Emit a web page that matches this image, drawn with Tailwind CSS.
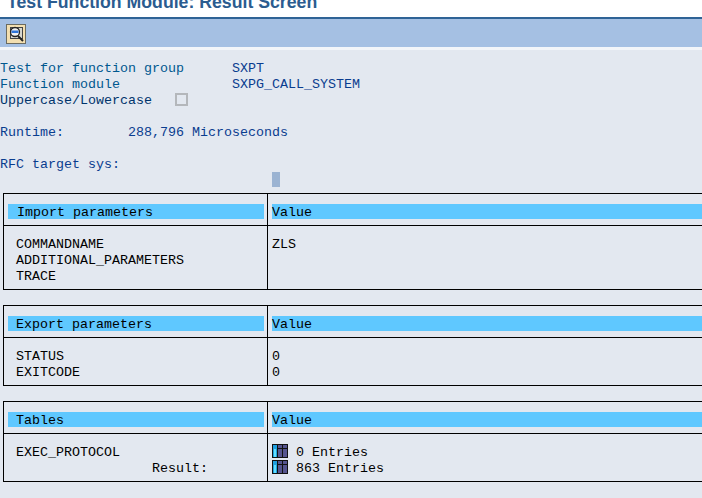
<!DOCTYPE html>
<html lang="en">
<head>
  <meta charset="UTF-8" />
  <title>Test Function Module: Result Screen</title>
  <script src="https://cdn.jsdelivr.net/npm/@tailwindcss/browser@4"></script>
</head>
<body class="h-[498px] w-[702px] overflow-hidden bg-[#e3e8f0] font-['Liberation_Mono',monospace] text-[13.33px] leading-[16px]">

  <!-- Title -->
  <div class="h-[17px] overflow-hidden bg-white pl-[7px]">
    <h1 class="-mt-[8px] font-['Liberation_Sans',sans-serif] text-[17.7px] leading-[20px] font-bold text-[#2b5c8f]">Test Function Module: Result Screen</h1>
  </div>
  <div class="h-[2px] bg-[#2f6396]"></div>

  <!-- Toolbar -->
  <div class="flex h-[28px] items-start bg-[#a5c0e3] pt-[5px] pl-[6px]">
    <button class="flex h-[20px] w-[20px] items-center justify-center border border-[#6b6b60] bg-[#f3dfb0]">
      <svg width="16" height="16" viewBox="0 0 16 16">
        <rect x="2.5" y="1.5" width="12" height="11" fill="#d8d8d0" stroke="#444"/>
        <circle cx="7" cy="6" r="4.5" fill="#f2f2f2" stroke="#222" stroke-width="1.3"/>
        <path d="M3.5 4.5h7v2.5h-7z" fill="#2f74d8"/>
        <path d="M10 10l5 5" stroke="#222" stroke-width="2"/>
      </svg>
    </button>
  </div>
  <div class="h-[3px] bg-[#f2f5f9]"></div>

  <!-- Header info -->
  <div class="pt-[11px]">
    <div class="flex h-[16px] text-[#00588f]"><span class="w-[232px]">Test for function group</span><span class="text-[#0a3d8f]">SXPT</span></div>
    <div class="flex h-[16px] text-[#00588f]"><span class="w-[232px]">Function module</span><span class="text-[#0a3d8f]">SXPG_CALL_SYSTEM</span></div>
    <div class="flex h-[16px] items-start text-[#00346b]">
      <span class="w-[175px]">Uppercase/Lowercase</span>
      <span class="h-[13px] w-[13px] border-2 border-[#b4b7bb] bg-[#e3e8f0]"></span>
    </div>
    <div class="mt-[16px] flex h-[16px] text-[#0a3d8f]"><span class="w-[128px]">Runtime:</span><span>288,796 Microseconds</span></div>
    <div class="mt-[16px] h-[16px] text-[#0a3d8f]">RFC target sys:</div>
    <div class="h-[21px] pl-[272px]"><div class="-mt-[1px] h-[15px] w-[8px] bg-[#9bb3d2]"></div></div>
  </div>

  <!-- Import parameters -->
  <section class="ml-[3px] border-y border-l border-black text-black">
    <div class="flex h-[32px] border-b border-black">
      <div class="w-[263px] pt-[10px] pl-[4px]"><div class="h-[15px] w-[256px] bg-[#5fc8ff] pl-[9px] leading-[17px]">Import parameters</div></div>
      <div class="flex-1 border-l border-black pt-[10px] pl-[4px]"><div class="h-[15px] bg-[#5fc8ff] leading-[17px]">Value</div></div>
    </div>
    <div class="flex h-[63px]">
      <div class="w-[263px] pt-[11px] pl-[12px]">COMMANDNAME<br>ADDITIONAL_PARAMETERS<br>TRACE</div>
      <div class="flex-1 border-l border-black pt-[11px] pl-[4px]">ZLS</div>
    </div>
  </section>

  <!-- Export parameters -->
  <section class="mt-[15px] ml-[3px] border-y border-l border-black text-black">
    <div class="flex h-[32px] border-b border-black">
      <div class="w-[263px] pt-[10px] pl-[4px]"><div class="h-[15px] w-[256px] bg-[#5fc8ff] pl-[8px] leading-[17px]">Export parameters</div></div>
      <div class="flex-1 border-l border-black pt-[10px] pl-[4px]"><div class="h-[15px] bg-[#5fc8ff] leading-[17px]">Value</div></div>
    </div>
    <div class="flex h-[47px]">
      <div class="w-[263px] pt-[11px] pl-[12px]">STATUS<br>EXITCODE</div>
      <div class="flex-1 border-l border-black pt-[11px] pl-[4px]">0<br>0</div>
    </div>
  </section>

  <!-- Tables -->
  <section class="mt-[15px] ml-[3px] border-y border-l border-black text-black">
    <div class="flex h-[32px] border-b border-black">
      <div class="w-[263px] pt-[10px] pl-[4px]"><div class="h-[15px] w-[256px] bg-[#5fc8ff] pl-[8px] leading-[17px]">Tables</div></div>
      <div class="flex-1 border-l border-black pt-[10px] pl-[4px]"><div class="h-[15px] bg-[#5fc8ff] leading-[17px]">Value</div></div>
    </div>
    <div class="flex h-[47px]">
      <div class="w-[263px] pt-[11px] pl-[12px]">EXEC_PROTOCOL<div class="pl-[136px]">Result:</div></div>
      <div class="flex-1 border-l border-black pt-[10px] pl-[4px]">
        <div class="flex h-[16px] gap-[8px]">
          <svg width="16" height="14" viewBox="0 0 16 14"><rect width="16" height="14" fill="#111"/><rect x="1" y="1" width="4" height="12" fill="#1f9fe0"/><rect x="2" y="5" width="2" height="8" fill="#5fe0ff"/><rect x="6" y="1" width="4" height="3" fill="#55558f"/><rect x="11" y="1" width="4" height="3" fill="#55558f"/><rect x="6" y="5" width="4" height="8" fill="#55558f"/><rect x="11" y="5" width="4" height="8" fill="#55558f"/></svg>
          <span class="pt-[1px]">0 Entries</span>
        </div>
        <div class="flex h-[16px] gap-[8px]">
          <svg width="16" height="14" viewBox="0 0 16 14"><rect width="16" height="14" fill="#111"/><rect x="1" y="1" width="4" height="12" fill="#1f9fe0"/><rect x="2" y="5" width="2" height="8" fill="#5fe0ff"/><rect x="6" y="1" width="4" height="3" fill="#55558f"/><rect x="11" y="1" width="4" height="3" fill="#55558f"/><rect x="6" y="5" width="4" height="8" fill="#55558f"/><rect x="11" y="5" width="4" height="8" fill="#55558f"/></svg>
          <span class="pt-[1px]">863 Entries</span>
        </div>
      </div>
    </div>
  </section>
</body>
</html>
